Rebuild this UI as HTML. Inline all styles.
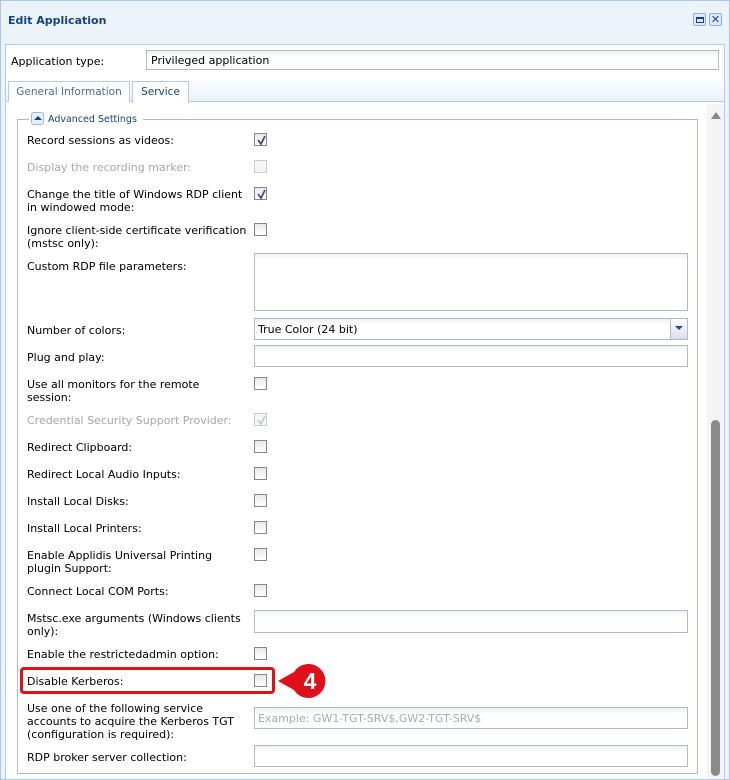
<!DOCTYPE html>
<html><head><style>
*{box-sizing:border-box;margin:0;padding:0}
body{width:730px;height:780px;overflow:hidden;background:#fff;font-family:"DejaVu Sans",Verdana,sans-serif;font-size:11px;color:#000;position:relative}
.abs{position:absolute}
.win{left:0;top:0;width:730px;height:780px;background:#edf3fb;border:1px solid #a9c6ec}
.lbl{position:absolute;left:27px;line-height:13px;white-space:nowrap;margin-top:1px}
.dis{color:#a8a8a8}
.cb{position:absolute;left:254px;width:13px;height:13px;border:1px solid #888;background:linear-gradient(#e8e8e8,#fff)}
.cb.d{border-color:#ccc;background:#f6f6f6}
.cb svg{position:absolute;left:1px;top:1px}
.inp{position:absolute;left:254px;width:434px;border:1px solid #b4b8cc;background:linear-gradient(#f0f0f0,#fff 6px)}
</style></head><body>
<div class="abs win"></div>
<div class="abs" style="left:8px;top:14px;font-weight:bold;color:#15428b;font-size:11px">Edit Application</div>
<div class="abs" style="left:693px;top:13px;width:13px;height:13px;border:1px solid #8fb0dd;border-radius:2px;background:#dde8f7"><div style="position:absolute;left:2px;top:3px;width:8px;height:6px;border:1px solid #15428b;border-top-width:2px"></div></div>
<div class="abs" style="left:709px;top:13px;width:13px;height:13px;border:1px solid #8fb0dd;border-radius:2px;background:#dde8f7;color:#15428b;font-size:11px;line-height:11px;text-align:center">✕</div>
<div class="abs" style="left:5px;top:44px;width:720px;height:736px;background:#fff;border:1px solid #aecdf5"></div>
<div class="abs" style="left:11px;top:55px">Application type:</div>
<div class="abs" style="left:146px;top:50px;width:573px;height:20px;border:1px solid #b4b8cc;background:linear-gradient(#f0f0f0,#fff 6px);padding:3px 4px 0">Privileged application</div>
<div class="abs" style="left:6px;top:78px;width:718px;height:24px;background:linear-gradient(#fff,#eaf2fd);border-bottom:1px solid #aecdf5"></div>
<div class="abs" style="left:8px;top:81px;width:122px;height:21px;border:1px solid #aecdf5;border-bottom:none;background:#fff;color:#4a6f9c;text-align:center;line-height:21px;font-size:10.5px">General Information</div>
<div class="abs" style="left:132px;top:81px;width:57px;height:22px;border:1px solid #aecdf5;border-bottom:none;background:#fff;color:#15428b;text-align:center;line-height:21px;font-size:10.5px">Service</div>
<div class="abs" style="left:17px;top:119px;width:681px;height:655px;border:1px solid #b4b8cc"></div>
<div class="abs" style="left:29px;top:111px;width:114px;height:14px;background:#fff"></div>
<div class="abs" style="left:31px;top:112px;width:13px;height:13px;border:1px solid #9ab8e0;border-radius:3px;background:#e6effa"><div style="position:absolute;left:2px;top:3px;border-left:4px solid transparent;border-right:4px solid transparent;border-bottom:4px solid #15428b"></div></div>
<div class="abs" style="left:48px;top:114px;color:#15428b;font-size:9.5px">Advanced Settings</div>
<div class="abs" style="left:707px;top:104px;width:17px;height:675px;background:#f4f4f4"></div>
<div class="abs" style="left:711px;top:112px;border-left:5px solid transparent;border-right:5px solid transparent;border-bottom:7px solid #888"></div>
<div class="abs" style="left:711px;top:420px;width:9px;height:356px;background:#8a8a8a;border-radius:5px"></div>

<div class="lbl" style="top:133px">Record sessions as videos:</div>
<div class="cb" style="top:133px"><svg width="11" height="11"><path d="M2 5 L5 9 L9 1" stroke="#3c4f8f" stroke-width="1.8" fill="none"/></svg></div>
<div class="lbl dis" style="top:160px">Display the recording marker:</div>
<div class="cb d" style="top:160px"></div>
<div class="lbl" style="top:187px">Change the title of Windows RDP client<br>in windowed mode:</div>
<div class="cb" style="top:187px"><svg width="11" height="11"><path d="M2 5 L5 9 L9 1" stroke="#3c4f8f" stroke-width="1.8" fill="none"/></svg></div>
<div class="lbl" style="top:223px">Ignore client-side certificate verification<br>(mstsc only):</div>
<div class="cb" style="top:223px"></div>
<div class="lbl" style="top:259px">Custom RDP file parameters:</div>
<div class="inp" style="top:253px;height:58px"></div>
<div class="lbl" style="top:323px">Number of colors:</div>
<div class="inp" style="top:318px;height:22px;padding:4px 3px 0">True Color (24 bit)</div>
<div class="abs" style="left:670px;top:319px;width:17px;height:20px;background:linear-gradient(#fff,#dde);border-left:1px solid #b4b8cc"><div style="position:absolute;left:4px;top:7px;border-left:4px solid transparent;border-right:4px solid transparent;border-top:4px solid #2a4a8a"></div></div>
<div class="lbl" style="top:350px">Plug and play:</div>
<div class="inp" style="top:345px;height:22px"></div>
<div class="lbl" style="top:377px">Use all monitors for the remote<br>session:</div>
<div class="cb" style="top:377px"></div>
<div class="lbl dis" style="top:413px">Credential Security Support Provider:</div>
<div class="cb d" style="top:413px"><svg width="11" height="11"><path d="M2 5 L5 9 L9 1" stroke="#c0c8dc" stroke-width="1.6" fill="none"/></svg></div>
<div class="lbl" style="top:440px">Redirect Clipboard:</div><div class="cb" style="top:440px"></div>
<div class="lbl" style="top:467px">Redirect Local Audio Inputs:</div><div class="cb" style="top:467px"></div>
<div class="lbl" style="top:494px">Install Local Disks:</div><div class="cb" style="top:494px"></div>
<div class="lbl" style="top:521px">Install Local Printers:</div><div class="cb" style="top:521px"></div>
<div class="lbl" style="top:548px">Enable Applidis Universal Printing<br>plugin Support:</div><div class="cb" style="top:548px"></div>
<div class="lbl" style="top:584px">Connect Local COM Ports:</div><div class="cb" style="top:584px"></div>
<div class="lbl" style="top:611px">Mstsc.exe arguments (Windows clients<br>only):</div>
<div class="inp" style="top:610px;height:23px"></div>
<div class="lbl" style="top:647px">Enable the restrictedadmin option:</div><div class="cb" style="top:647px"></div>
<div class="lbl" style="top:674px">Disable Kerberos:</div><div class="cb" style="top:674px"></div>
<div class="abs" style="left:20px;top:667px;width:255px;height:27px;border:3px solid #e0101a;border-radius:4px"></div>
<svg class="abs" style="left:276px;top:662px" width="56" height="38"><path d="M2 19 L18 10 A17 17 0 1 1 18 28 Z" fill="#e0101a"/><text x="34" y="27" font-family="Liberation Sans,sans-serif" font-weight="bold" font-size="23" fill="#fff" text-anchor="middle">4</text></svg>
<div class="lbl" style="top:701px">Use one of the following service<br>accounts to acquire the Kerberos TGT<br>(configuration is required):</div>
<div class="inp" style="top:707px;height:22px;padding:4px 3px 0;color:#aaa">Example: GW1-TGT-SRV$,GW2-TGT-SRV$</div>
<div class="lbl" style="top:750px">RDP broker server collection:</div>
<div class="inp" style="top:745px;height:22px"></div>
</body></html>
